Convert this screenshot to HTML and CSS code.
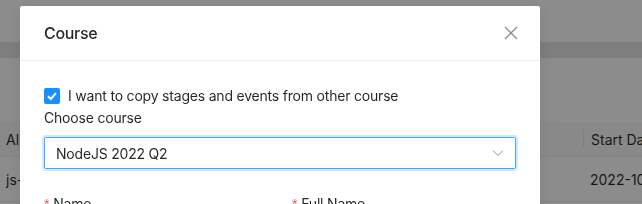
FILE: index.html
```html
<!DOCTYPE html>
<html lang="en">
<head>
    <meta charset="UTF-8">
    <meta name="viewport" content="width=device-width, initial-scale=1.0">
    <title>Course</title>
    <link rel="stylesheet" href="styles.css">
</head>
<body>
    <div class="pagina">
        <div class="topo"></div>
        <div class="abas"></div>
        <div class="espaco"></div>
        <div class="tabela">
            <div class="linha cabecalho">
                <div class="celula alias">Alias</div>
                <div class="celula meio"></div>
                <div class="celula data">Start Date</div>
            </div>
            <div class="linha">
                <div class="celula alias">js-fe-2022</div>
                <div class="celula meio"></div>
                <div class="celula data">2022-10-01</div>
            </div>
        </div>
    </div>

    <div class="mascara"></div>

    <div class="modal">
        <div class="modal-cabecalho">
            <div class="modal-titulo">Course</div>
            <button class="fechar" aria-label="Close">
                <svg width="16" height="16" viewBox="0 0 16 16">
                    <path d="M2 2 L14 14 M14 2 L2 14" stroke="rgba(0,0,0,0.45)" stroke-width="1.3" fill="none"/>
                </svg>
            </button>
        </div>
        <div class="modal-corpo">
            <label class="caixa">
                <span class="marcador">
                    <svg width="16" height="16" viewBox="0 0 16 16">
                        <path d="M4 8.2 L6.8 11 L12 5.2" stroke="#ffffff" stroke-width="2" fill="none"/>
                    </svg>
                </span>
                <span class="caixa-texto">I want to copy stages and events from other course</span>
            </label>
            <div class="campo">
                <div class="rotulo">Choose course</div>
                <div class="seletor">
                    <span class="seletor-valor">NodeJS 2022 Q2</span>
                    <svg class="seta" width="12" height="12" viewBox="0 0 12 12">
                        <path d="M1 3.5 L6 8.5 L11 3.5" stroke="#bfbfbf" stroke-width="1.1" fill="none"/>
                    </svg>
                </div>
            </div>
            <div class="grade">
                <div class="rotulo"><span class="obrigatorio">*</span>Name</div>
                <div class="rotulo"><span class="obrigatorio">*</span>Full Name</div>
            </div>
        </div>
    </div>
</body>
</html>
```

FILE: styles.css
```css
body {
    font-family: Inter, "Noto Sans", "Liberation Sans", sans-serif;
    font-size: 14px;
    letter-spacing: -0.2px;
    margin: 0;
    color: rgba(0, 0, 0, 0.85);
    background-color: #ffffff;
    overflow: hidden;
    height: 204px;
}
.pagina {
    width: 642px;
}
.topo {
    height: 42px;
    background-color: #ffffff;
}
.abas {
    height: 16px;
    background-color: #e6e6e6;
}
.espaco {
    height: 64px;
}
.tabela {
    letter-spacing: 0;
}
.linha {
    display: flex;
    border-bottom: 1px solid #f0f0f0;
    height: 44px;
    align-items: center;
}
.cabecalho {
    background-color: #fafafa;
    height: 34px;
}
.celula {
    padding: 0 8px;
    white-space: nowrap;
    flex-shrink: 0;
}
.alias {
    width: 200px;
    padding-left: 6px;
}
.meio {
    width: 353px;
}
.cabecalho .meio {
    height: 18px;
    border-right: 1px solid #e8e8e8;
}
.data {
    padding-left: 7px;
}
.mascara {
    position: fixed;
    inset: 0;
    background-color: rgba(0, 0, 0, 0.45);
}
.modal {
    position: absolute;
    top: 6px;
    left: 20px;
    width: 520px;
    background-color: #ffffff;
    border-radius: 2px;
    box-shadow: 0 3px 6px -4px rgba(0, 0, 0, 0.12), 0 6px 16px rgba(0, 0, 0, 0.08);
}
.modal-cabecalho {
    display: flex;
    justify-content: space-between;
    align-items: center;
    padding: 16px 24px;
    border-bottom: 1px solid #f0f0f0;
}
.modal-titulo {
    font-size: 16px;
    font-weight: 500;
    line-height: 22px;
    letter-spacing: -0.3px;
}
.fechar {
    border: none;
    background: none;
    padding: 0;
    margin-right: -3px;
    width: 16px;
    height: 16px;
    display: flex;
    cursor: pointer;
}
.modal-corpo {
    padding: 24px;
}
.caixa {
    display: flex;
    align-items: center;
    line-height: 22px;
}
.marcador {
    width: 16px;
    height: 16px;
    background-color: #1890ff;
    border-radius: 2px;
    display: flex;
}
.caixa-texto {
    padding: 0 8px;
}
.rotulo {
    line-height: 22px;
    padding-bottom: 8px;
}
.campo {
    margin-bottom: 24px;
}
.seletor {
    height: 30px;
    border: 1px solid #40a9ff;
    border-radius: 2px;
    box-shadow: 0 0 0 2px rgba(24, 144, 255, 0.2);
    display: flex;
    align-items: center;
    justify-content: space-between;
    padding: 0 11px;
}
.grade {
    display: grid;
    grid-template-columns: 1fr 1fr;
    column-gap: 24px;
}
.obrigatorio {
    color: #ff4d4f;
    margin-right: 4px;
    font-family: SimSun, sans-serif;
}
```
